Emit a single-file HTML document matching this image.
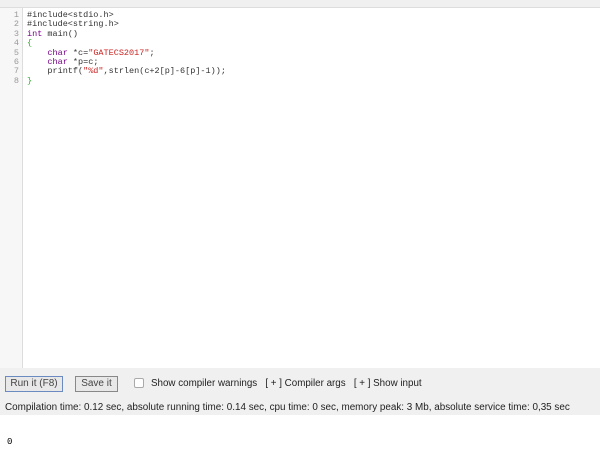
<!DOCTYPE html><html><head><style>
body{margin:0;width:600px;height:456px;background:#fff;font-family:"Liberation Sans",sans-serif;position:relative;overflow:hidden}
#top{position:absolute;left:0;top:0;width:600px;height:7px;background:#f0f0f0;border-bottom:1px solid #ddd}
#gut{position:absolute;left:0;top:8px;width:22px;height:360px;background:#f7f7f7;border-right:1px solid #ddd}
pre{margin:0;font-family:"Liberation Mono",monospace;font-size:8.5px;line-height:9.4px;position:absolute;top:11px}
#nums{left:0;width:19px;text-align:right;color:#999}
#code{left:27px;color:#333}
.s{color:#c22}.k{color:#708}.b{color:#3a3}
#bar{position:absolute;left:0;top:368px;width:600px;height:47px;background:#f0f0f0;font-size:9.8px;color:#222}
.btn{position:absolute;top:8px;height:14px;border:1px solid #888;background:#e8e8e8;font-size:10px;line-height:14px;text-align:center;color:#444}
</style></head><body>
<div id="top"></div><div id="gut"></div>
<pre id="nums">1
2
3
4
5
6
7
8</pre>
<pre id="code">#include&lt;stdio.h&gt;
#include&lt;string.h&gt;
<span class="k">int</span> main()
<span class="b">{</span>
    <span class="k">char</span> *c=<span class="s">"GATECS2017"</span>;
    <span class="k">char</span> *p=c;
    printf(<span class="s">"%d"</span>,strlen(c+2[p]-6[p]-1));
<span class="b">}</span></pre>
<div id="bar">
<div class="btn" style="left:5px;width:56px;border-color:#6a8ac0">Run it (F8)</div>
<div class="btn" style="left:75px;width:41px">Save it</div>
<div style="position:absolute;left:134px;top:10px;width:8px;height:8px;border:1px solid #aaa;background:#fff;border-radius:2px"></div>
<div style="position:absolute;left:151px;top:10px;white-space:nowrap">Show compiler warnings &nbsp; [ + ] Compiler args &nbsp; [ + ] Show input</div>
<div style="position:absolute;left:5px;top:34px;font-size:9.9px;white-space:nowrap">Compilation time: 0.12 sec, absolute running time: 0.14 sec, cpu time: 0 sec, memory peak: 3 Mb, absolute service time: 0,35 sec</div>
</div>
<div style="position:absolute;left:7px;top:437px;font-family:'Liberation Mono',monospace;font-size:9px">0</div>
</body></html>
